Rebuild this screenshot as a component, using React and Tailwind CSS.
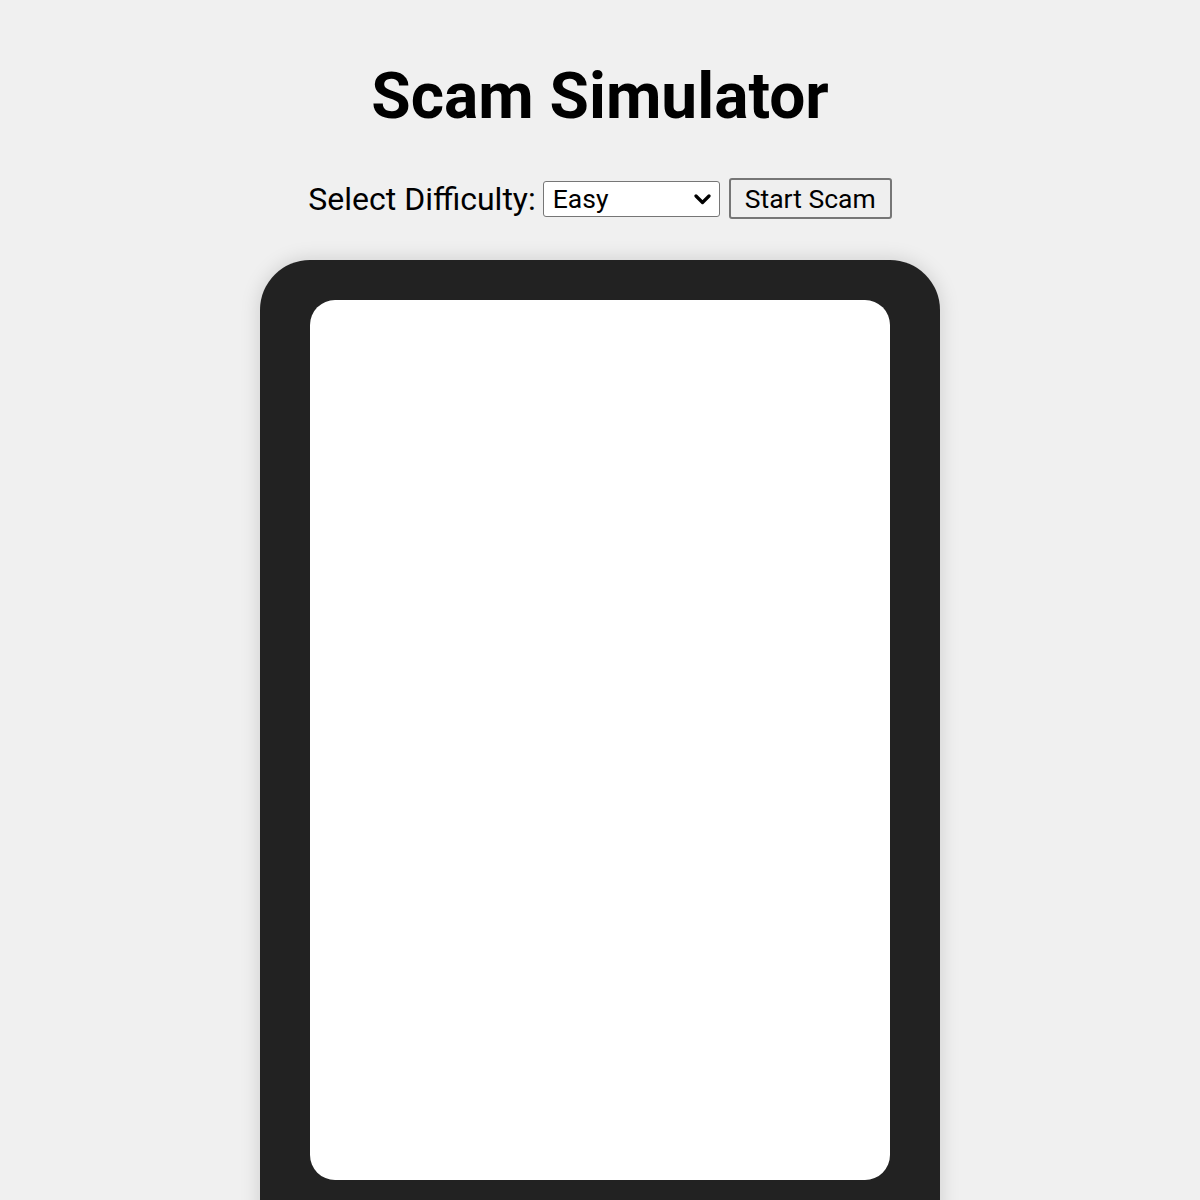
export default function App() {
  return (
    <div className="bg-[#f0f0f0] flex flex-col items-center font-['Roboto',sans-serif] text-black overflow-hidden h-[1200px]">
      <h1 className="text-[64px] font-bold leading-[75px] mt-[59px]">Scam Simulator</h1>
      <div className="mt-[44px] flex items-center h-[44px]">
        <span className="text-[32px] leading-[38px]">Select Difficulty:</span>
        <div className="relative ml-[7px]">
          <select className="appearance-none block w-[177px] h-[36px] text-[26.5px] leading-[32px] border border-[#767676] rounded-[3px] bg-white pl-[9px] pt-[1px]" defaultValue="easy">
            <option value="easy">Easy</option>
            <option value="medium">Medium</option>
            <option value="hard">Hard</option>
          </select>
          <svg className="absolute right-[9px] top-[13px] pointer-events-none" width="17" height="11" viewBox="0 0 17 11">
            <path d="M2 2 L8.5 8.5 L15 2" fill="none" stroke="#000" strokeWidth="3.2" strokeLinecap="round" strokeLinejoin="round" />
          </svg>
        </div>
        <button className="ml-[9px] w-[163px] h-[41px] text-[26.5px] leading-[32px] border-2 border-[#767676] rounded-[3px] bg-[#efefef]">Start Scam</button>
      </div>
      <div className="mt-[41px] w-[680px] shrink-0 bg-[#222222] rounded-[50px] pt-[40px] px-[50px] pb-[100px] shadow-[0_0_20px_rgba(0,0,0,0.15)]">
        <div className="h-[880px] bg-white rounded-[25px]"></div>
      </div>
    </div>
  );
}
